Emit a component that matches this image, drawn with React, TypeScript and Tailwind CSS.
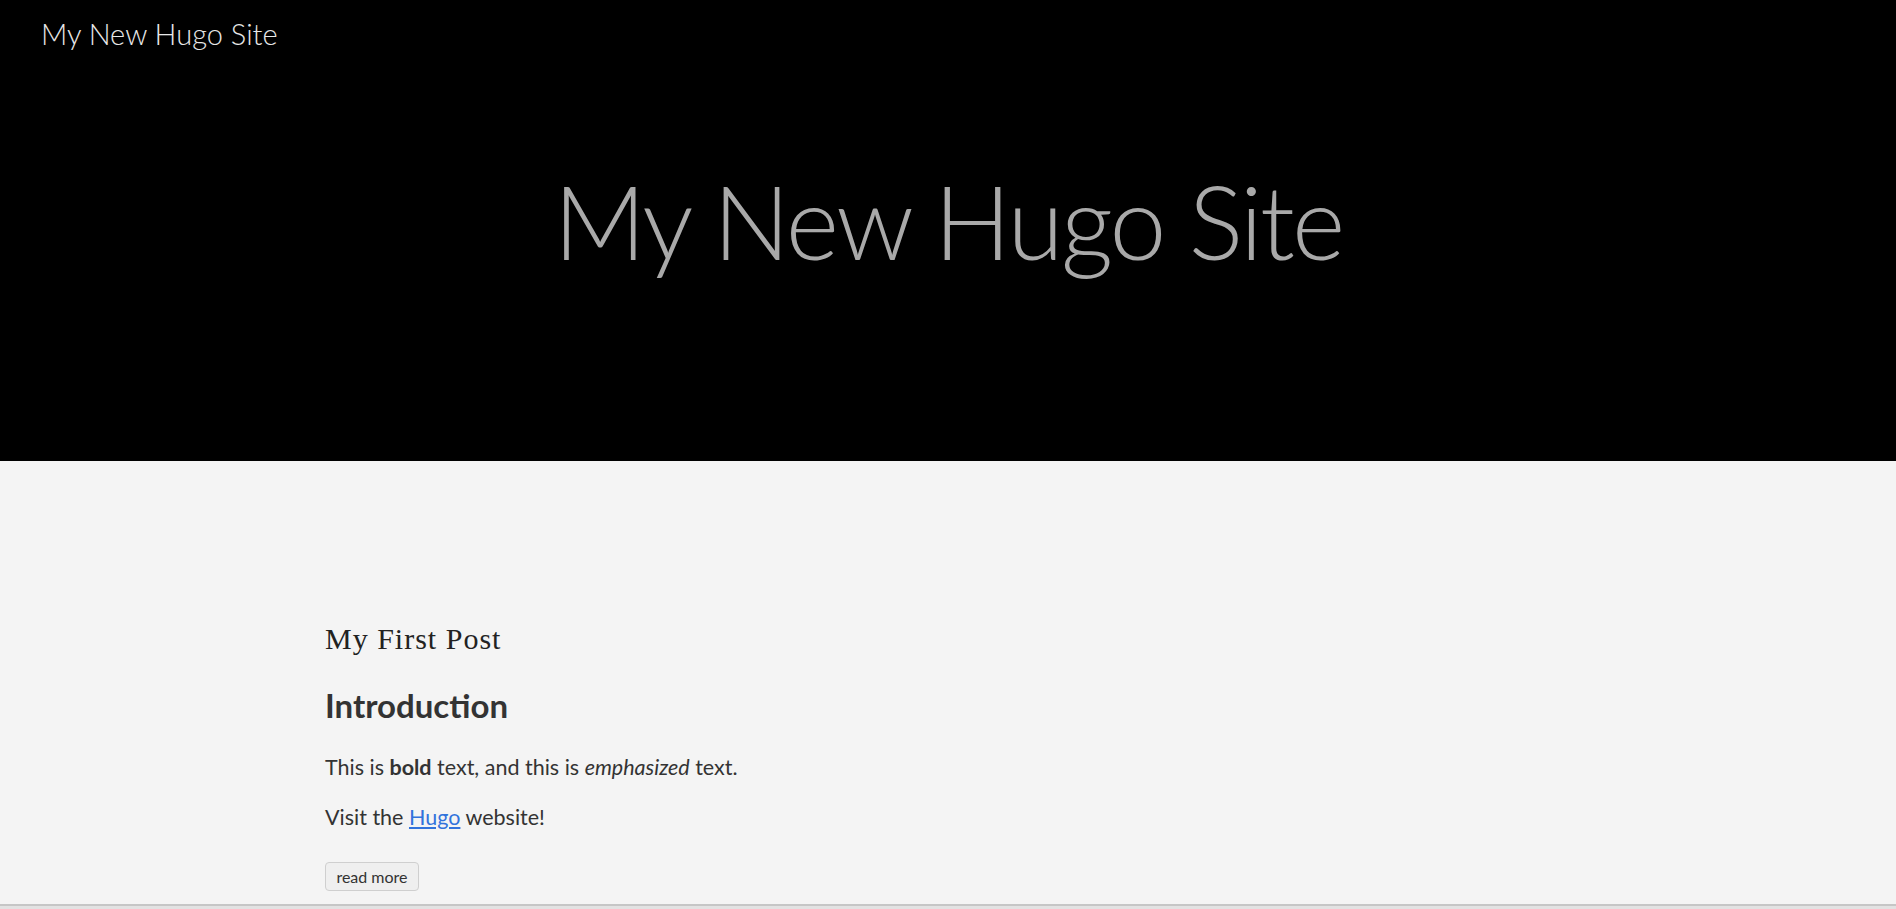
import React from "react";

const sans = "font-['Lato','Noto_Sans',sans-serif]";

export default function App() {
  return (
    <div className={`min-h-screen bg-[#f4f4f4] text-[#333] ${sans}`}>
      <header className="bg-black h-[461px] flex flex-col">
        <nav className="px-[41px] pt-[12px]">
          <a href="#" className="text-[29px] font-light text-[#e8e8e8] leading-[44px]">
            My New Hugo Site
          </a>
        </nav>
        <div className="flex justify-center pt-[114px]">
          <h1 className="text-[102px] font-light text-[#a9a9a9] leading-none tracking-[-2.7px]">
            My New Hugo Site
          </h1>
        </div>
      </header>

      <main className="px-[325px] pt-[160px] pb-[13px]">
        <article>
          <h2 className="font-['Georgia','Liberation_Serif',serif] text-[30px] leading-[36px] tracking-[1px] text-[#222]">
            My First Post
          </h2>
          <h3 className="mt-[28px] text-[33px] font-bold leading-[40px] text-[#333]">Introduction</h3>
          <p className="mt-[27px] text-[21.5px] leading-[30px]">
            This is <strong className="font-bold">bold</strong> text, and this is <em>emphasized</em> text.
          </p>
          <p className="mt-[20px] text-[21.5px] leading-[30px]">
            Visit the{" "}
            <a href="#" className="text-[#3273dc] underline">
              Hugo
            </a>{" "}
            website!
          </p>
          <button className="block mt-[30px] h-[29px] w-[94px] rounded-[4px] border border-[#cfcfcf] bg-[#efefef] text-[16px] text-[#333]">
            read more
          </button>
        </article>
      </main>
      <footer className="border-t-2 border-[#c6c6c6] bg-[#e2e2e2] h-[40px]" />
    </div>
  );
}
